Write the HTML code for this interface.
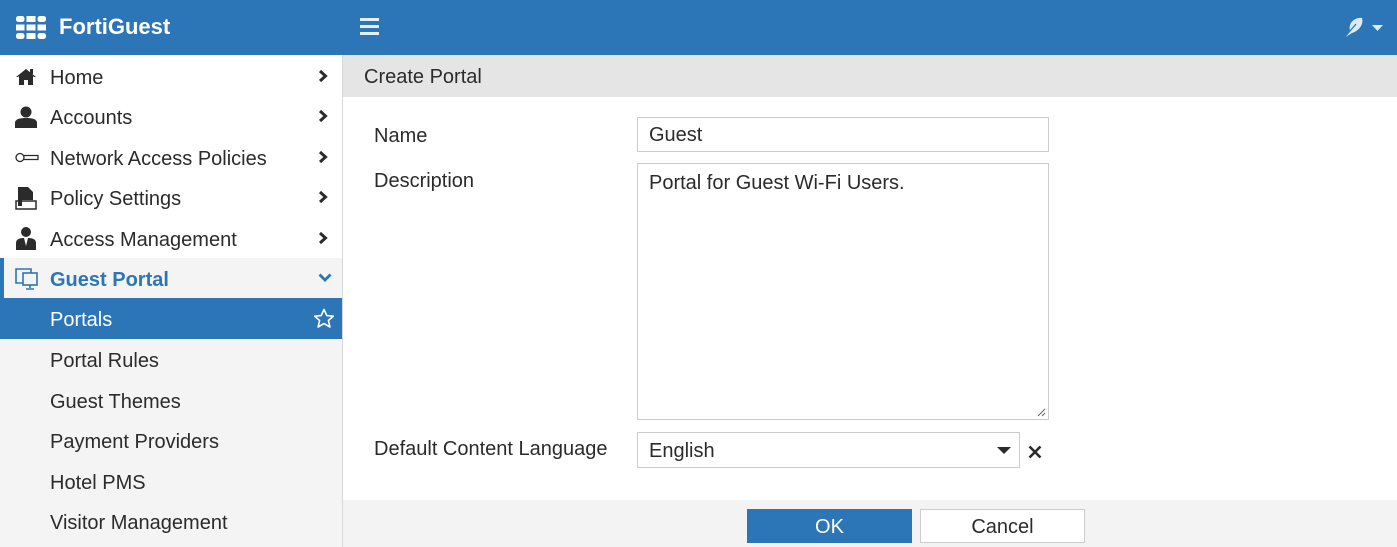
<!DOCTYPE html>
<html><head><style>
*{box-sizing:border-box;margin:0;padding:0}
body{width:1397px;height:547px;overflow:hidden;font-family:"Liberation Sans",sans-serif;color:#2b2b2b;background:#fff;position:relative}
.hdr{position:absolute;left:0;top:0;width:1397px;height:55px;background:#2c76b8;color:#fff}
.side{position:absolute;left:0;top:55px;width:343px;height:492px;background:#f4f4f4;border-right:1px solid #d8d8d8}
.row{position:absolute;left:0;width:342px;height:40.5px;font-size:20px;line-height:44px}
.row .t{position:absolute;left:50px}
.ab{position:absolute}
.f{font-size:20px}
</style></head><body>
<div class="hdr">
  <svg class="ab" style="left:16px;top:16px" width="30" height="23" viewBox="0 0 30 23" fill="#fff">
    <rect x="0" y="0" width="8.5" height="6" rx="2.5"/><rect x="10.5" y="0" width="9" height="6"/><rect x="21.5" y="0" width="8.5" height="6" rx="2.5"/>
    <rect x="0" y="8.5" width="8.5" height="6"/><rect x="10.5" y="8.5" width="9" height="6"/><rect x="21.5" y="8.5" width="8.5" height="6"/>
    <rect x="0" y="17" width="8.5" height="6" rx="2.5"/><rect x="10.5" y="17" width="9" height="6"/><rect x="21.5" y="17" width="8.5" height="6" rx="2.5"/>
  </svg>
  <div class="ab" style="left:59px;top:14px;font-size:22px;font-weight:bold">FortiGuest</div>
  <svg class="ab" style="left:360px;top:18px" width="19" height="17"><rect y="0" width="19" height="3" fill="#e6eef7"/><rect y="7" width="19" height="3" fill="#e6eef7"/><rect y="14" width="19" height="3" fill="#e6eef7"/></svg>
  <svg class="ab" style="left:1342px;top:14px" width="24" height="26" viewBox="0 0 24 26"><path d="M2 24 L8 16 C6 10 12 3 20 4 C22 10 17 17 10 19 Z" fill="#dde9f5"/><path d="M2 24 L14 10" stroke="#2c76b8" stroke-width="1.3"/></svg>
  <svg class="ab" style="left:1372px;top:25px" width="11" height="7"><path d="M0 0 H11 L5.5 6Z" fill="#dde9f5"/></svg>
</div>
<svg width="0" height="0" style="position:absolute"><defs><symbol id="ch" viewBox="0 0 10 14"><path d="M2 2 L7.5 7 L2 12" stroke="#2b2b2b" stroke-width="3" fill="none"/></symbol></defs></svg>
<div class="side">
  <div style="position:absolute;left:0;top:0;width:342px;height:203px;background:#fff"></div>
  <div class="row" style="top:1px"><svg class="ab" style="left:15px;top:12px" width="22" height="17" viewBox="0 0 22 17"><path d="M11 1 L1 9 L3 9 L4 8 V17 H9 V12 H13 V17 H18 V8 L19 9 L21 9 Z" fill="#2b2b2b"/><rect x="15" y="1" width="3" height="5" fill="#2b2b2b"/></svg><span class="t">Home</span><svg class="ab" style="left:318px;top:13px" width="10" height="14"><use href="#ch"/></svg></div>
  <div class="row" style="top:41px"><svg class="ab" style="left:15px;top:10px" width="22" height="22"><circle cx="11" cy="6" r="5.5" fill="#2b2b2b"/><path d="M0 22 V17 C0 13 5 12 11 12 C17 12 22 13 22 17 V22 Z" fill="#2b2b2b"/></svg><span class="t">Accounts</span><svg class="ab" style="left:318px;top:13px" width="10" height="14"><use href="#ch"/></svg></div>
  <div class="row" style="top:82px"><svg class="ab" style="left:15px;top:15px" width="24" height="11"><circle cx="5" cy="5.5" r="4" fill="none" stroke="#2b2b2b" stroke-width="1.3"/><path d="M9 3.5 H23 V7.5 H9" fill="none" stroke="#2b2b2b" stroke-width="1.3"/></svg><span class="t">Network Access Policies</span><svg class="ab" style="left:318px;top:13px" width="10" height="14"><use href="#ch"/></svg></div>
  <div class="row" style="top:122px"><svg class="ab" style="left:15px;top:9px" width="22" height="24"><path d="M3 1 H13 L18 6 V14 H7 V20 H3 Z" fill="#2b2b2b"/><rect x="1" y="15" width="20" height="8" fill="none" stroke="#2b2b2b" stroke-width="1.5"/></svg><span class="t">Policy Settings</span><svg class="ab" style="left:318px;top:13px" width="10" height="14"><use href="#ch"/></svg></div>
  <div class="row" style="top:163px"><svg class="ab" style="left:16px;top:9px" width="20" height="23"><circle cx="10" cy="5" r="5" fill="#2b2b2b"/><path d="M0 23 V16 C0 12 4 11 8 11 L10 19 L12 11 C16 11 20 12 20 16 V23 Z" fill="#2b2b2b"/></svg><span class="t">Access Management</span><svg class="ab" style="left:318px;top:13px" width="10" height="14"><use href="#ch"/></svg></div>
  <div class="row" style="top:203px;color:#2c76b8;font-weight:bold;border-left:4px solid #2c76b8"><svg class="ab" style="left:11px;top:10px" width="24" height="22" fill="none" stroke="#2c76b8" stroke-width="1.6"><path d="M8 15 H1 V1 H16 V5"/><rect x="8" y="5" width="14" height="12"/><path d="M15 17 V20 M11 21 H19"/></svg><span class="t" style="left:46px">Guest Portal</span><svg class="ab" style="left:314px;top:15px" width="14" height="10"><path d="M1.5 1.5 L7 7 L12.5 1.5" stroke="#2c76b8" stroke-width="2.8" fill="none"/></svg></div>
  <div class="row" style="top:243px;background:#2c76b8;color:#fff;height:41px"><span class="t">Portals</span><svg class="ab" style="left:313px;top:10px" width="22" height="21" viewBox="0 0 22 21"><path d="M11 1.5 L13.8 7.6 L20.3 8.2 L15.4 12.5 L16.9 19 L11 15.6 L5.1 19 L6.6 12.5 L1.7 8.2 L8.2 7.6 Z" fill="none" stroke="#fff" stroke-width="1.6" stroke-linejoin="round"/></svg></div>
  <div class="row" style="top:284px"><span class="t">Portal Rules</span></div>
  <div class="row" style="top:325px"><span class="t">Guest Themes</span></div>
  <div class="row" style="top:365px"><span class="t">Payment Providers</span></div>
  <div class="row" style="top:406px"><span class="t">Hotel PMS</span></div>
  <div class="row" style="top:446px"><span class="t">Visitor Management</span></div>
</div>
<div class="ab f" style="left:343px;top:55px;width:1054px;height:42px;background:#e5e5e5;line-height:45px;padding-left:21px">Create Portal</div>
<div class="ab f" style="left:374px;top:125px">Name</div>
<div class="ab f" style="left:374px;top:170px">Description</div>
<div class="ab f" style="left:374px;top:438px">Default Content Language</div>
<div class="ab f" style="left:637px;top:117px;width:412px;height:35px;border:1px solid #ccc;line-height:35px;padding-left:11px">Guest</div>
<div class="ab f" style="left:637px;top:163px;width:412px;height:257px;border:1px solid #ccc;padding:8px 11px">Portal for Guest Wi-Fi Users.
<svg class="ab" style="right:2px;bottom:2px" width="9" height="9"><path d="M8 1 L1 8 M8 5 L5 8" stroke="#666" stroke-width="1"/></svg></div>
<div class="ab f" style="left:637px;top:432px;width:383px;height:36px;border:1px solid #ccc;line-height:36px;padding-left:11px">English<svg class="ab" style="left:359px;top:14px" width="14" height="8"><path d="M0 0 H14 L7 7Z" fill="#2b2b2b"/></svg></div>
<svg class="ab" style="left:1028px;top:445px" width="14" height="14"><path d="M1.5 1.5 L12.5 12.5 M12.5 1.5 L1.5 12.5" stroke="#2b2b2b" stroke-width="2.6"/></svg>
<div class="ab" style="left:343px;top:500px;width:1054px;height:47px;background:#f3f3f3"></div>
<div class="ab f" style="left:747px;top:509px;width:165px;height:34px;background:#2c76b8;color:#fff;line-height:37px;text-align:center">OK</div>
<div class="ab f" style="left:920px;top:509px;width:165px;height:34px;background:#fff;border:1px solid #ccc;line-height:35px;text-align:center">Cancel</div>
</body></html>
